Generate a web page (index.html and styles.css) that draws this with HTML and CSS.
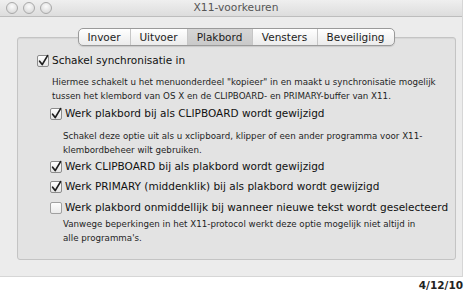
FILE: index.html
```html
<!DOCTYPE html>
<html lang="nl">
<head>
<meta charset="utf-8">
<title>X11-voorkeuren</title>
<link rel="stylesheet" href="styles.css">
</head>
<body>
<div class="window">
  <div class="titlebar">
    <div class="lights"><span></span><span></span><span></span></div>
    <div class="title">X11-voorkeuren</div>
    <div></div>
  </div>
  <div class="content">
    <div class="tabs">
      <div class="tabgroup">
        <div class="tab w1">Invoer</div>
        <div class="tab w2">Uitvoer</div>
        <div class="tab w3 sel">Plakbord</div>
        <div class="tab w4">Vensters</div>
        <div class="tab w5">Beveiliging</div>
      </div>
    </div>
    <div class="panel">
      <div class="opt l1 m-first"><span class="cb"><svg viewBox="0 0 12 12" width="12" height="12"><path d="M2.6 6.2 L5.2 9.6 L10.6 0.6" /></svg></span><span>Schakel synchronisatie in</span></div>
      <p class="desc d1 m8">Hiermee schakelt u het menuonderdeel "kopieer" in en maakt u synchronisatie mogelijk<br>tussen het klembord van OS X en de CLIPBOARD- en PRIMARY-buffer van X11.</p>
      <div class="opt l2 m3"><span class="cb"><svg viewBox="0 0 12 12" width="12" height="12"><path d="M2.6 6.2 L5.2 9.6 L10.6 0.6" /></svg></span><span>Werk plakbord bij als CLIPBOARD wordt gewijzigd</span></div>
      <p class="desc d2 m9">Schakel deze optie uit als u xclipboard, klipper of een ander programma voor X11-<br>klembordbeheer wilt gebruiken.</p>
      <div class="opt l2 m2"><span class="cb"><svg viewBox="0 0 12 12" width="12" height="12"><path d="M2.6 6.2 L5.2 9.6 L10.6 0.6" /></svg></span><span>Werk CLIPBOARD bij als plakbord wordt gewijzigd</span></div>
      <div class="opt l2 m5"><span class="cb"><svg viewBox="0 0 12 12" width="12" height="12"><path d="M2.6 6.2 L5.2 9.6 L10.6 0.6" /></svg></span><span>Werk PRIMARY (middenklik) bij als plakbord wordt gewijzigd</span></div>
      <div class="opt l2 m6"><span class="cb off"></span><span>Werk plakbord onmiddellijk bij wanneer nieuwe tekst wordt geselecteerd</span></div>
      <p class="desc d2 m3">Vanwege beperkingen in het X11-protocol werkt deze optie mogelijk niet altijd in<br>alle programma's.</p>
    </div>
  </div>
</div>
<div class="date">4/12/10</div>
</body>
</html>
```
FILE: styles.css
```css
html, body {
  margin: 0;
  padding: 0;
}
body {
  background: #ffffff;
  font-family: "DejaVu Sans", "Liberation Sans", sans-serif;
  width: 474px;
  height: 294px;
  overflow: hidden;
}
.window {
  width: 463px;
  height: 277px;
  box-sizing: border-box;
  background: #ececec;
  border-right: 1px solid #d6d6d6;
  border-bottom: 1px solid #d6d6d6;
  display: flex;
  flex-direction: column;
}
.titlebar {
  height: 17px;
  box-sizing: border-box;
  background: linear-gradient(#efefef, #dddddd);
  border-bottom: 1px solid #bdbdbd;
  display: grid;
  grid-template-columns: 1fr auto 1fr;
  align-items: center;
}
.lights {
  display: flex;
  gap: 5px;
  padding-left: 6px;
}
.lights span {
  width: 12px;
  height: 12px;
  box-sizing: border-box;
  border-radius: 50%;
  border: 1px solid #a9a9a9;
  background: radial-gradient(circle at 50% 35%, #fbfbfb, #d2d2d2);
}
.title {
  font-size: 10.7px;
  color: #555555;
  padding-left: 10px;
  line-height: 16px;
}
.content {
  flex: 1;
  display: flex;
  flex-direction: column;
  padding: 11px 6px 16px 17px;
}
.tabs {
  display: flex;
  justify-content: center;
  height: 18px;
  margin-bottom: -9px;
  position: relative;
  z-index: 1;
  padding-right: 1px;
}
.tabgroup {
  display: flex;
  border: 1px solid #9a9a9a;
  border-radius: 5px;
  background: linear-gradient(#ffffff, #ebebeb);
  overflow: hidden;
  box-shadow: 0 1px 1px rgba(0, 0, 0, 0.12);
}
.tab {
  box-sizing: border-box;
  text-align: center;
  font-size: 10.5px;
  line-height: 16px;
  color: #1c1c1c;
  border-left: 1px solid #c6c6c6;
}
.tab:first-child {
  border-left: none;
}
.tab.sel {
  background: linear-gradient(#d6d6d6, #c9c9c9);
}
.w1 { width: 51px; }
.w2 { width: 57px; }
.w3 { width: 65px; }
.w4 { width: 65px; }
.w5 { width: 77px; }
.panel {
  flex: 1;
  background: #e3e3e3;
  border: 1px solid #c4c4c4;
  border-radius: 3px;
  box-shadow: inset 0 1px 1px rgba(0, 0, 0, 0.06);
  display: flex;
  flex-direction: column;
  align-items: flex-start;
}
.opt {
  display: flex;
  align-items: center;
  gap: 3px;
  font-size: 10.5px;
  line-height: 15px;
  color: #111111;
  white-space: nowrap;
}
.l1 { margin-left: 19px; }
.l2 { margin-left: 32px; }
.cb {
  width: 12px;
  height: 12px;
  box-sizing: border-box;
  border: 1px solid #8c8c8c;
  border-radius: 2px;
  background: linear-gradient(#ffffff, #e4e4e4);
  display: flex;
  flex-shrink: 0;
}
.cb svg {
  overflow: visible;
  margin: -1px;
}
.cb path {
  fill: none;
  stroke: #1e1e1e;
  stroke-width: 1.7;
  stroke-linecap: round;
  stroke-linejoin: round;
}
.cb.off {
  border-color: #a0a0a0;
  background: linear-gradient(#fdfdfd, #eaeaea);
}
.desc {
  margin: 0;
  font-size: 8.7px;
  line-height: 13.5px;
  color: #1e1e1e;
  white-space: nowrap;
}
.d1 { margin-left: 34px; }
.d2 { margin-left: 45px; }
.m-first { margin-top: 15px; }
.m2 { margin-top: 2px; }
.m3 { margin-top: 3px; }
.m5 { margin-top: 5px; }
.m6 { margin-top: 6px; }
.m8 { margin-top: 8px; }
.m9 { margin-top: 9px; }
.date {
  width: 463px;
  height: 17px;
  line-height: 17px;
  text-align: right;
  font-size: 10.5px;
  font-weight: bold;
  color: #222222;
}
```
